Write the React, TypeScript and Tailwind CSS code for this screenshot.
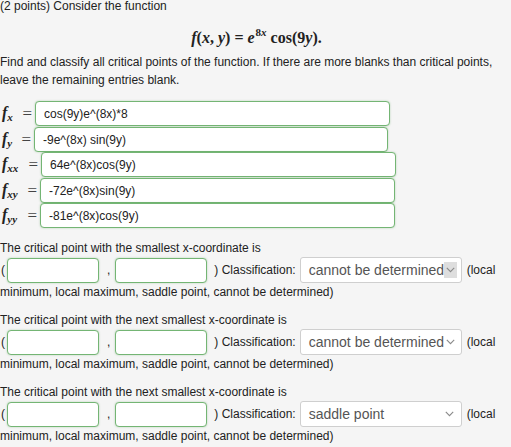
import React from 'react';

const serif = "font-['Liberation_Serif',serif]";

const Deriv: React.FC<{ sub: string; w: string }> = ({ sub, w }) => (
  <span className={`${serif} flex ${w} items-center justify-between whitespace-nowrap leading-[24px]`}>
    <span className="text-[16px]">
      <i className="font-bold">f</i>
      <i className="text-[11px] font-bold relative top-[3px]">{sub}</i>
    </span>
    <span className="text-[17px] text-[#444]">=</span>
  </span>
);

const greenInput =
  'h-[25px] rounded-[4px] border border-[#74b574] bg-white shadow-[0_0_2px_rgba(90,160,90,0.45)] px-[8px] text-[12px] text-[#222] outline-none';

const derivs = [
  { sub: 'x', value: 'cos(9y)e^(8x)*8', lw: 'w-[30px]', w: 'w-[355px]', h: 'h-[26px]' },
  { sub: 'y', value: '-9e^(8x) sin(9y)', lw: 'w-[29px]', w: 'w-[354px]', h: 'h-[25px]' },
  { sub: 'xx', value: '64e^(8x)cos(9y)', lw: 'w-[36px]', w: 'w-[355px]', h: 'h-[26px]' },
  { sub: 'xy', value: '-72e^(8x)sin(9y)', lw: 'w-[35px]', w: 'w-[355px]', h: 'h-[25px]' },
  { sub: 'yy', value: '-81e^(8x)cos(9y)', lw: 'w-[35px]', w: 'w-[355px]', h: 'h-[25px]' },
];

const points = [
  { title: 'The critical point with the smallest x-coordinate is', choice: 'cannot be determined', hover: true, mt: 'mt-[11px]' },
  { title: 'The critical point with the next smallest x-coordinate is', choice: 'cannot be determined', hover: false, mt: 'mt-[10px]' },
  { title: 'The critical point with the next smallest x-coordinate is', choice: 'saddle point', hover: false, mt: 'mt-[10px]' },
];

const Chevron: React.FC = () => (
  <svg width="9" height="6" viewBox="0 0 9 6" fill="none">
    <path d="M0.8 0.8 L4.5 4.6 L8.2 0.8" stroke="#8a8a8a" strokeWidth="1.1" />
  </svg>
);

const Select: React.FC<{ choice: string; hover: boolean }> = ({ choice, hover }) => (
  <div className="ml-[4px] flex h-[26px] w-[162px] items-center justify-between rounded-[3px] border border-[#cfcfcf] bg-white pl-[8px] pr-[4px]">
    <span className="text-[14px] text-[#555] whitespace-nowrap">{choice}</span>
    <span className={`flex h-[16px] w-[14px] items-center justify-center ${hover ? 'bg-[#dedede]' : ''}`}>
      <Chevron />
    </span>
  </div>
);

export default function App() {
  return (
    <div className="min-h-[447px] w-[511px] overflow-hidden bg-[#f5f5f5] font-['Liberation_Sans',Arial,sans-serif] text-[12px] leading-[18px] text-[#222]">
      <div className="-mt-[3px]">(2 points) Consider the function</div>

      <div className={`${serif} mt-[11px] flex h-[24px] items-center justify-center pl-[2px] text-[16px] font-bold`}>
        <i>f</i>(<i>x</i>,&nbsp;<i>y</i>)&nbsp;=&nbsp;<i>e</i>
        <span className="relative -top-[6px] ml-[1px] text-[11px]">
          8<i>x</i>
        </span>
        &nbsp;cos(9<i>y</i>).
      </div>

      <div className="mt-[3px]">
        Find and classify all critical points of the function. If there are more blanks than critical points,
        <br />
        leave the remaining entries blank.
      </div>

      <div className="mt-[12px]">
        {derivs.map((d) => (
          <div key={d.sub} className={`flex items-start pl-[2px] ${d.h}`}>
            <Deriv sub={d.sub} w={d.lw} />
            <input readOnly value={d.value} className={`${greenInput} ml-[3px] ${d.w} h-[25px]`} />
          </div>
        ))}
      </div>

      {points.map((p, i) => (
        <div key={i} className={p.mt}>
          <div>{p.title}</div>
          <div className="flex h-[26px] items-center">
            <span className="ml-[1px]">(</span>
            <input readOnly className={`${greenInput} ml-[2px] w-[92px] h-[25px]`} />
            <span className="ml-[8px]">,</span>
            <input readOnly className={`${greenInput} ml-[5px] w-[92px] h-[25px]`} />
            <span className="ml-[7px] whitespace-nowrap">) Classification:</span>
            <Select choice={p.choice} hover={p.hover} />
            <span className="ml-[5px]">(local</span>
          </div>
          <div>minimum, local maximum, saddle point, cannot be determined)</div>
        </div>
      ))}
    </div>
  );
}
